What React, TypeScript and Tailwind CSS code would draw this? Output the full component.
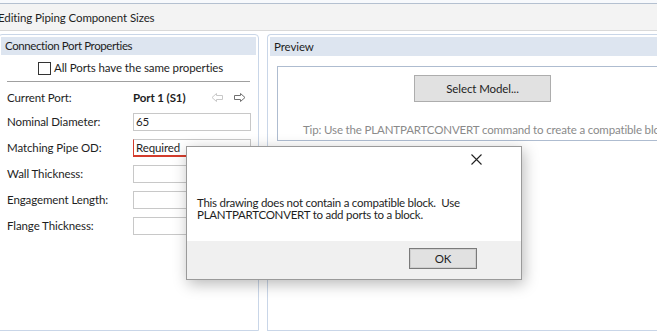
import React from "react";

const rows = [
  { label: "Nominal Diameter:", value: "65" },
  { label: "Matching Pipe OD:", value: "Required", error: true },
  { label: "Wall Thickness:", value: "" },
  { label: "Engagement Length:", value: "" },
  { label: "Flange Thickness:", value: "" },
];

function Arrow({ dir, color }: { dir: "left" | "right"; color: string }) {
  return (
    <svg width="12" height="9" viewBox="0 0 12 9" className={dir === "left" ? "-scale-x-100" : ""}>
      <path d="M0.5 2.5 H6.5 V0.5 L11 4.5 L6.5 8.5 V6.5 H0.5 Z" fill="none" stroke={color} strokeWidth="1" />
    </svg>
  );
}

export default function App() {
  return (
    <div className="relative w-[657px] h-[332px] overflow-hidden bg-white text-[11.5px] tracking-[-0.1px] text-[#1e1e1e] font-['Lato',sans-serif]">
      <div className="h-[4px] bg-[#f7f9fc] border-b border-[#b4c0d0]" />
      <div className="h-[27px] bg-[#f3f3f3] border-b border-[#d9d9d9] flex items-center pt-[2px]">
        <span className="ml-[-2px]">Editing Piping Component Sizes</span>
      </div>

      <div className="flex gap-[8px] pt-[3px] h-[300px]">
        {/* left panel */}
        <div className="shrink-0 ml-[-2px] w-[261px] h-full border border-[#c9d6e8] rounded-t-[4px] p-[2px] pb-0">
          <div className="h-[18px] bg-[#dde5f0] flex items-center pl-[4px] tracking-[-0.4px]">Connection Port Properties</div>
          <div className="flex items-center h-[22px] mt-[2px] pl-[37px]">
            <span className="w-[13px] h-[13px] border border-[#333] bg-white" />
            <span className="ml-[3px]">All Ports have the same properties</span>
          </div>
          <div className="ml-[6px] w-[243px] border-t border-[#a0a0a0] mt-[2px]" />
          <div className="pl-[6px] mt-[4px]">
            <div className="flex items-center h-[23px]">
              <span className="w-[126px]">Current Port:</span>
              <span className="font-bold w-[78px]">Port 1 (S1)</span>
              <Arrow dir="left" color="#c8c8c8" />
              <span className="w-[11px]" />
              <Arrow dir="right" color="#707070" />
            </div>
            {rows.map((r) => (
              <div key={r.label} className="flex items-center h-[26px]">
                <span className="w-[126px]">{r.label}</span>
                <div
                  className={
                    r.error
                      ? "w-[118px] h-[18px] border border-[#c8c8c8] border-l-[#d43c2c] border-b-2 border-b-[#d43c2c] flex items-center pl-[2px]"
                      : "w-[118px] h-[18px] border border-[#c8c8c8] flex items-center pl-[2px]"
                  }
                >
                  {r.value}
                </div>
              </div>
            ))}
          </div>
        </div>

        {/* right panel */}
        <div className="flex-1 min-w-0 overflow-hidden h-full border border-r-0 border-[#c9d6e8] rounded-tl-[4px] pt-[2px] pl-[2px]">
          <div className="h-[19px] bg-[#dde5f0] flex items-center pl-[4px]">Preview</div>
          <div className="ml-[7px] mt-[10px] h-[75px] border border-r-0 border-[#aebcd0] flex flex-col">
            <button className="mt-[8px] ml-[136px] w-[137px] h-[27px] bg-[#e1e1e1] border border-[#adadad]">Select Model...</button>
            <span className="mt-[19px] ml-[25px] whitespace-nowrap text-[#8a8a8a] tracking-[-0.15px]">
              Tip: Use the PLANTPARTCONVERT command to create a compatible block.
            </span>
          </div>
        </div>
      </div>

      {/* message box */}
      <div className="absolute left-[186px] top-[146px] w-[336px] h-[134px] bg-white border border-[#9a9a9a] shadow-[2px_4px_14px_rgba(0,0,0,0.28)] flex flex-col">
        <div className="h-[94px] relative">
          <svg className="absolute left-[284px] top-[7px]" width="11" height="11" viewBox="0 0 11 11">
            <path d="M0.5 0.5 L10.5 10.5 M10.5 0.5 L0.5 10.5" stroke="#222" strokeWidth="1.1" />
          </svg>
          <p className="absolute left-[10px] top-[50px] text-[11.5px] tracking-[-0.25px] leading-[12px] whitespace-nowrap">
            This drawing does not contain a compatible block.&nbsp; Use
            <br />
            PLANTPARTCONVERT to add ports to a block.
          </p>
        </div>
        <div className="flex-1 bg-[#f0f0f0] flex justify-end items-start pr-[44px] pt-[7px]">
          <button className="w-[68px] h-[21px] bg-[#e1e1e1] border border-[#7a7a7a] shadow-[inset_0_0_0_1px_#cfcfcf]">OK</button>
        </div>
      </div>
    </div>
  );
}
